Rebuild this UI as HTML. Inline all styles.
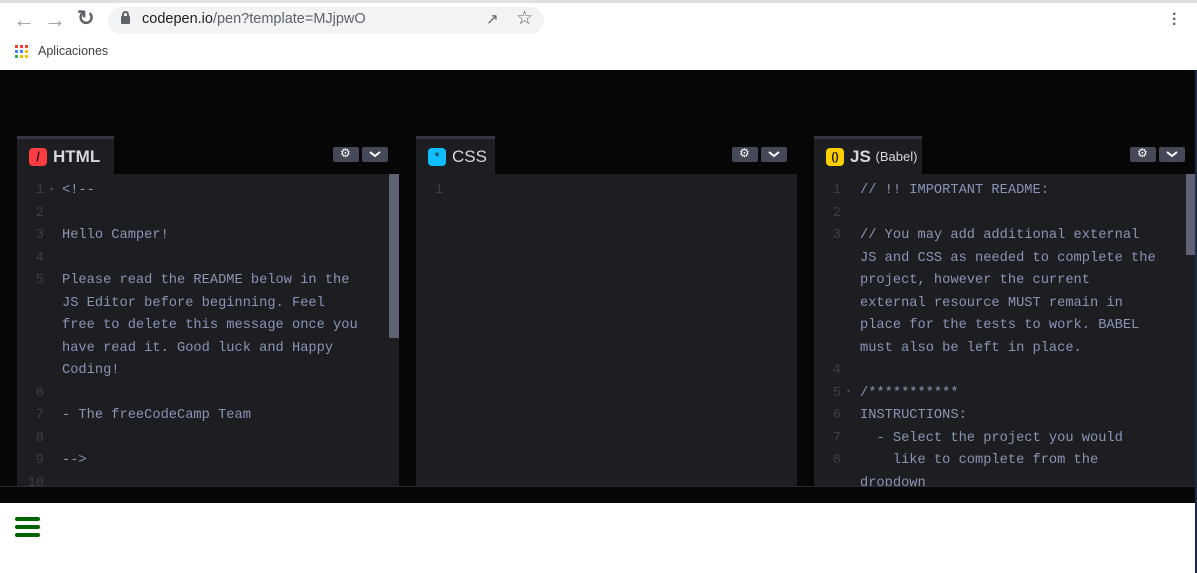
<!DOCTYPE html>
<html><head><meta charset="utf-8"><style>
*{margin:0;padding:0;box-sizing:border-box}
body{width:1197px;height:573px;overflow:hidden;background:#fff;font-family:"Liberation Sans",sans-serif;position:relative}
.a{position:absolute}
.top{left:0;top:0;width:1197px;height:3px;background:#dee1e6}
.url{left:108px;top:7px;width:436px;height:27px;border-radius:14px;background:#f1f3f4}
.blk{left:0;top:70px;width:1195px;height:433px;background:#060606}
.rs{left:1195px;top:70px;width:2px;height:503px;background:#1c2a44}
.pane{top:136px;background:#1d1e22}
.tab{top:136px;height:38px;background:#1d1e22;border-top:3px solid #333642;color:#d5d7de;font-size:17px;font-weight:bold;padding-left:12px;display:flex;align-items:center}
.ic{display:inline-block;width:18px;height:18px;border-radius:4px;margin-right:6px;text-align:center;font-size:13px;line-height:18px;font-weight:bold}
.btn{top:147px;width:26px;height:15px;background:#444857;border-radius:2px}
.code{font-family:"Liberation Mono",monospace;font-size:13.7px;line-height:22.5px;color:#8a94b4;white-space:pre}
.ln{font-family:"Liberation Mono",monospace;font-size:13.7px;line-height:22.5px;color:#3b3e48;text-align:right;white-space:pre}
.sb{background:#5f6272}
.bot{left:0;top:486px;width:1195px;height:17px;background:#060606;border-top:1px solid #2a2c33}
.hb{left:15px;width:25px;height:4px;background:#006400;border-radius:2px}
</style></head><body>
<div class="a top"></div>
<div class="a" style="left:13px;top:7px;color:#9aa0a6;font-size:22px">&#8592;</div>
<div class="a" style="left:44px;top:7px;color:#9aa0a6;font-size:22px">&#8594;</div>
<div class="a" style="left:77px;top:6px;color:#5f6368;font-size:21px;font-weight:bold">&#8635;</div>
<div class="a url"></div>
<div class="a" style="left:121px;top:16px;width:9px;height:8px;background:#5f6368;border-radius:1px"></div>
<div class="a" style="left:122px;top:11px;width:7px;height:7px;border:2px solid #5f6368;border-bottom:none;border-radius:4px 4px 0 0"></div>
<div class="a" style="left:142px;top:11px;font-size:14.5px;color:#202124">codepen.io<span style="color:#5f6368">/pen?template=MJjpwO</span></div>
<div class="a" style="left:486px;top:10px;font-size:15px;color:#5f6368">&#8599;</div>
<div class="a" style="left:516px;top:7px;font-size:19px;color:#5f6368">&#9734;</div>
<div class="a" style="left:1172px;top:12px;font-size:16px;color:#5f6368;line-height:5px;font-weight:bold">·<br>·<br>·</div>
<svg class="a" style="left:15px;top:45px" width="14" height="14"><g>
<rect x="0" y="0" width="3" height="3" fill="#ea4335"/><rect x="5" y="0" width="3" height="3" fill="#ea4335"/><rect x="10" y="0" width="3" height="3" fill="#ea4335"/>
<rect x="0" y="5" width="3" height="3" fill="#4285f4"/><rect x="5" y="5" width="3" height="3" fill="#4285f4"/><rect x="10" y="5" width="3" height="3" fill="#fbbc05"/>
<rect x="0" y="10" width="3" height="3" fill="#34a853"/><rect x="5" y="10" width="3" height="3" fill="#fbbc05"/><rect x="10" y="10" width="3" height="3" fill="#fbbc05"/></g></svg>
<div class="a" style="left:38px;top:44px;font-size:12.5px;color:#3c4043">Aplicaciones</div>

<div class="a blk"></div>
<div class="a rs"></div>

<!-- HTML pane -->
<div class="a pane" style="left:17px;top:174px;width:382px;height:312px"></div>
<div class="a tab" style="left:17px;width:97px"><span class="ic" style="background:#ff3c41;color:#1d1e22">/</span>HTML</div>
<div class="a btn" style="left:333px"></div><div class="a btn" style="left:362px"></div>
<div class="a sb" style="left:389px;top:174px;width:10px;height:164px"></div>
<div class="a ln" style="left:17px;top:180px;width:27px">1
2
3
4
5




6
7
8
9
10</div>
<div class="a" style="left:50px;top:186px;font-size:6px;color:#555">▾</div>
<div class="a code" style="left:62px;top:180px">&lt;!--

Hello Camper!

Please read the README below in the
JS Editor before beginning. Feel
free to delete this message once you
have read it. Good luck and Happy
Coding!

- The freeCodeCamp Team

--&gt;</div>

<!-- CSS pane -->
<div class="a pane" style="left:416px;top:174px;width:381px;height:312px"></div>
<div class="a tab" style="left:416px;width:79px;font-weight:normal"><span class="ic" style="background:#0ebeff;color:#1d1e22;font-weight:normal">*</span>CSS</div>
<div class="a btn" style="left:732px"></div><div class="a btn" style="left:761px"></div>
<div class="a ln" style="left:416px;top:180px;width:27px">1</div>

<!-- JS pane -->
<div class="a pane" style="left:814px;top:174px;width:381px;height:312px"></div>
<div class="a tab" style="left:814px;width:108px"><span class="ic" style="background:#fcd000;color:#1d1e22;font-size:11px">()</span>JS&nbsp;<span style="font-weight:normal;font-size:13px">(Babel)</span></div>
<div class="a btn" style="left:1130px"></div><div class="a btn" style="left:1159px"></div>
<div class="a sb" style="left:1186px;top:174px;width:9px;height:81px"></div>
<div class="a ln" style="left:814px;top:180px;width:27px">1
2
3





4
5
6
7
8</div>
<div class="a" style="left:847px;top:388px;font-size:6px;color:#555">▾</div>
<div class="a code" style="left:860px;top:180px">// !! IMPORTANT README:

// You may add additional external
JS and CSS as needed to complete the
project, however the current
external resource MUST remain in
place for the tests to work. BABEL
must also be left in place.

/***********
INSTRUCTIONS:
  - Select the project you would
    like to complete from the
dropdown</div>

<!-- gear/chevron icons -->
<div class="a" style="left:340px;top:146px;color:#fff;font-size:12px">⚙</div>
<div class="a" style="left:739px;top:146px;color:#fff;font-size:12px">⚙</div>
<div class="a" style="left:1137px;top:146px;color:#fff;font-size:12px">⚙</div>
<svg class="a" style="left:369px;top:151px" width="12" height="7"><path d="M1 1l5 4 5-4" stroke="#fff" stroke-width="2" fill="none"/></svg>
<svg class="a" style="left:768px;top:151px" width="12" height="7"><path d="M1 1l5 4 5-4" stroke="#fff" stroke-width="2" fill="none"/></svg>
<svg class="a" style="left:1166px;top:151px" width="12" height="7"><path d="M1 1l5 4 5-4" stroke="#fff" stroke-width="2" fill="none"/></svg>

<div class="a bot"></div>
<div class="a hb" style="top:517px"></div>
<div class="a hb" style="top:525px"></div>
<div class="a hb" style="top:533px"></div>
</body></html>
